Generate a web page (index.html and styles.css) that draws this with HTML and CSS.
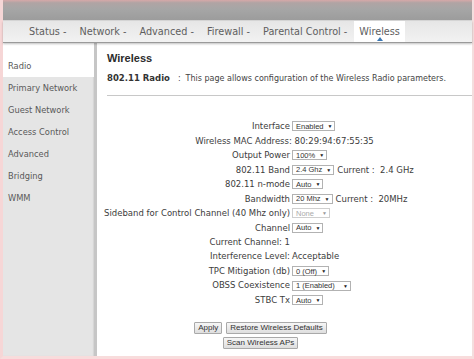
FILE: index.html
```html
<!DOCTYPE html>
<html lang="en">
<head>
  <meta charset="UTF-8" />
  <meta name="viewport" content="width=device-width, initial-scale=1.0" />
  <title>Wireless - Radio</title>
  <link rel="stylesheet" href="styles.css">
</head>
<body>
  <div class="frame">
    <div class="topbar"></div>

    <nav class="tabs">
      <a href="#">Status -</a>
      <a href="#">Network -</a>
      <a href="#">Advanced -</a>
      <a href="#">Firewall -</a>
      <a href="#">Parental Control -</a>
      <a href="#" class="active">Wireless</a>
    </nav>

    <div class="main">
      <aside class="side">
        <a href="#" class="active">Radio</a>
        <a href="#">Primary Network</a>
        <a href="#">Guest Network</a>
        <a href="#">Access Control</a>
        <a href="#">Advanced</a>
        <a href="#">Bridging</a>
        <a href="#">WMM</a>
      </aside>

      <section class="content">
        <div class="page-head">
          <h2>Wireless</h2>
          <p class="intro"><b>802.11 Radio</b><span class="colon">:</span>This page allows configuration of the Wireless Radio parameters.</p>
        </div>
        <hr>

        <div class="form">
          <div class="lbl">Interface</div>
          <div><span class="sel">Enabled<i>&#9660;</i></span></div>

          <div class="full">Wireless MAC Address: 80:29:94:67:55:35</div>

          <div class="lbl">Output Power</div>
          <div><span class="sel">100%<i>&#9660;</i></span></div>

          <div class="lbl">802.11 Band</div>
          <div><span class="sel">2.4 Ghz<i>&#9660;</i></span><span class="cur">Current :&nbsp; 2.4 GHz</span></div>

          <div class="lbl">802.11 n-mode</div>
          <div><span class="sel">Auto<i>&#9660;</i></span></div>

          <div class="lbl">Bandwidth</div>
          <div><span class="sel">20 Mhz<i>&#9660;</i></span><span class="cur">Current :&nbsp; 20MHz</span></div>

          <div class="lbl">Sideband for Control Channel (40 Mhz only)</div>
          <div><span class="sel off">None &nbsp;<i>&#9660;</i></span></div>

          <div class="lbl">Channel</div>
          <div><span class="sel">Auto<i>&#9660;</i></span></div>

          <div class="lbl">Current Channel: 1</div>
          <div></div>

          <div class="lbl">Interference Level:</div>
          <div>Acceptable</div>

          <div class="lbl">TPC Mitigation (db)</div>
          <div><span class="sel">0 (Off)<i>&#9660;</i></span></div>

          <div class="lbl">OBSS Coexistence</div>
          <div><span class="sel">1 (Enabled) &nbsp;<i>&#9660;</i></span></div>

          <div class="lbl">STBC Tx</div>
          <div><span class="sel">Auto<i>&#9660;</i></span></div>
        </div>

        <div class="buttons">
          <div>
            <button type="button" class="btn">Apply</button>
            <button type="button" class="btn">Restore Wireless Defaults</button>
          </div>
          <div>
            <button type="button" class="btn">Scan Wireless APs</button>
          </div>
        </div>
      </section>
    </div>
  </div>
</body>
</html>
```

FILE: styles.css
```css
* {
  margin: 0;
  padding: 0;
  box-sizing: border-box;
}

html, body {
  height: 100%;
  overflow: hidden;
}

body {
  font-family: 'DejaVu Sans', Verdana, sans-serif;
  font-size: 8.5px;
  color: #444;
  background: #fff;
}

.frame {
  height: 359px;
  display: flex;
  flex-direction: column;
  border-left: 3px solid #f6d6d6;
  border-right: 2px solid #f4dede;
  border-bottom: 3px solid #f8dcdc;
}

.topbar {
  height: 21px;
  background: linear-gradient(#d6a8a8 0, #b0a4a4 14%, #a6a6a6 45%, #9c9c9c 100%);
  border-bottom: 1px solid #d8d8d8;
}

/* top tabs */
.tabs {
  height: 22px;
  display: flex;
  align-items: stretch;
  padding-left: 19.5px;
  background: linear-gradient(#e6e6e6, #f2f2f2);
  border-bottom: 1px solid #9a9a9a;
  box-shadow: 0 1px 2px rgba(0, 0, 0, 0.25);
  position: relative;
  z-index: 1;
}

.tabs a {
  display: flex;
  align-items: center;
  padding: 0 6.5px;
  font-size: 9.7px;
  color: #5e5e5e;
  text-decoration: none;
}

.tabs a.active {
  background: #fff;
  position: relative;
  padding: 0 5.5px;
}

.tabs a.active::after {
  content: "";
  position: absolute;
  left: 23px;
  bottom: 1px;
  border-left: 3px solid transparent;
  border-right: 3px solid transparent;
  border-bottom: 4px solid #3b78b4;
}

.main {
  flex: 1;
  display: flex;
  min-height: 0;
}

/* left menu */
.side {
  width: 94px;
  background: #e5e5e5;
  border-right: 3px solid #c6c6c6;
  box-shadow: inset -1px 0 1px #d4d4d4;
  display: flex;
  flex-direction: column;
  font-size: 8.3px;
}

.side a {
  display: block;
  height: 22px;
  line-height: 22px;
  padding-left: 5px;
  color: #595959;
  text-decoration: none;
}

.side a.active {
  background: #fff;
  height: 34px;
  padding-top: 12px;
}

/* page body */
.content {
  flex: 1;
  min-width: 0;
}

.page-head {
  padding: 8px 0 0 10px;
}

h2 {
  font-family: 'Liberation Sans', Arial, sans-serif;
  font-size: 11px;
  line-height: 14px;
  font-weight: bold;
  color: #2c2c2c;
}

.intro {
  margin-top: 7px;
  line-height: 13px;
  font-size: 8px;
  color: #444;
}

.intro b {
  font-size: 8.5px;
  color: #333;
}

.colon {
  margin: 0 5px 0 8px;
}

hr {
  border: none;
  border-top: 1px solid #c8c8c8;
  margin: 10px 0 0 10px;
}

.form {
  margin-top: 23px;
  display: grid;
  grid-template-columns: 193px 1fr;
  grid-auto-rows: 14.47px;
  column-gap: 2px;
  align-items: center;
  color: #3c3c3c;
}

.form .lbl {
  text-align: right;
  white-space: nowrap;
}

.form .full {
  grid-column: 1 / -1;
  text-align: center;
}

.sel {
  display: inline-flex;
  align-items: center;
  height: 10px;
  padding: 0 2px 0 3px;
  border: 1px solid #b2b2b2;
  background: #fff;
  font-family: 'Liberation Sans', Arial, sans-serif;
  font-size: 7.5px;
  color: #333;
  vertical-align: middle;
}

.sel i {
  font-style: normal;
  font-size: 5px;
  margin-left: 4px;
  color: #222;
}

.sel.off {
  color: #aaa;
  border-color: #cfcfcf;
}

.sel.off i {
  color: #999;
}

.cur {
  margin-left: 3px;
  vertical-align: middle;
}

.buttons {
  width: 327px;
  margin-top: 15px;
  text-align: center;
}

.buttons div {
  display: flex;
  justify-content: center;
  gap: 4px;
  margin-bottom: 3px;
}

.btn {
  height: 12px;
  padding: 0 3px;
  border: 1px solid #a9a9a9;
  border-radius: 1px;
  background: linear-gradient(#f6f6f6, #dedede);
  font-family: 'Liberation Sans', Arial, sans-serif;
  font-size: 8px;
  line-height: 10px;
  color: #333;
}
```
